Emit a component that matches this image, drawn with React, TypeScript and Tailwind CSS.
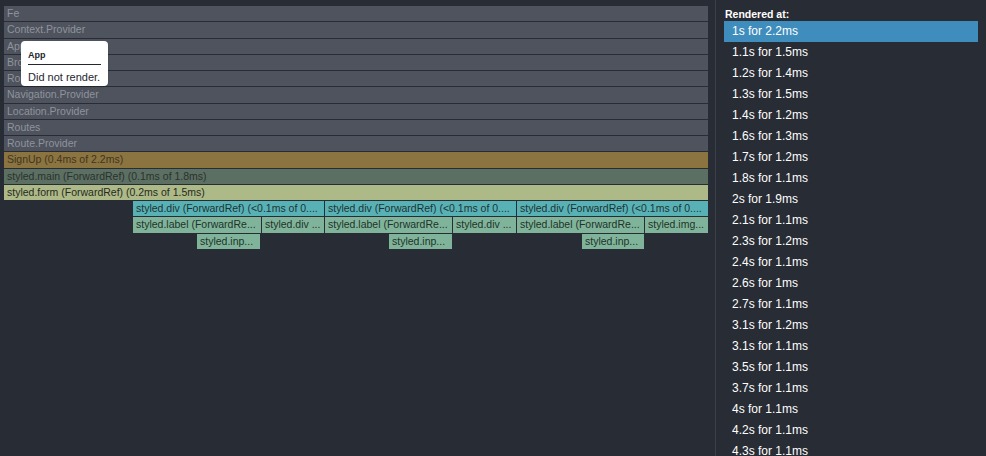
type Node = { label: string; x: number; w: number; bg: string; fg: string };

const GRAY = { bg: "#4f535e", fg: "#8e939c" };

const topRows = [
  "Fe",
  "Context.Provider",
  "App",
  "BrowserRouter",
  "Router",
  "Navigation.Provider",
  "Location.Provider",
  "Routes",
  "Route.Provider",
];

const rows: Node[][] = [
  ...topRows.map((label) => [{ label, x: 4, w: 704, ...GRAY }]),
  [{ label: "SignUp (0.4ms of 2.2ms)", x: 4, w: 704, bg: "#8b7440", fg: "#3f3420" }],
  [{ label: "styled.main (ForwardRef) (0.1ms of 1.8ms)", x: 4, w: 704, bg: "#5b6f62", fg: "#2b322e" }],
  [{ label: "styled.form (ForwardRef) (0.2ms of 1.5ms)", x: 4, w: 704, bg: "#adb986", fg: "#262a24" }],
  [
    { label: "styled.div (ForwardRef) (<0.1ms of 0....", x: 133, w: 191, bg: "#58b2b5", fg: "#1e3236" },
    { label: "styled.div (ForwardRef) (<0.1ms of 0....", x: 325, w: 191, bg: "#58b2b5", fg: "#1e3236" },
    { label: "styled.div (ForwardRef) (<0.1ms of 0....", x: 517, w: 191, bg: "#58b2b5", fg: "#1e3236" },
  ],
  [
    { label: "styled.label (ForwardRe...", x: 133, w: 128, bg: "#80b49a", fg: "#21332b" },
    { label: "styled.div ...", x: 262, w: 62, bg: "#80b49a", fg: "#21332b" },
    { label: "styled.label (ForwardRe...", x: 325, w: 127, bg: "#80b49a", fg: "#21332b" },
    { label: "styled.div ...", x: 453, w: 63, bg: "#80b49a", fg: "#21332b" },
    { label: "styled.label (ForwardRe...", x: 517, w: 127, bg: "#80b49a", fg: "#21332b" },
    { label: "styled.img...", x: 645, w: 63, bg: "#80b49a", fg: "#21332b" },
  ],
  [
    { label: "styled.inp...", x: 197, w: 63, bg: "#80b49a", fg: "#21332b" },
    { label: "styled.inp...", x: 389, w: 63, bg: "#80b49a", fg: "#21332b" },
    { label: "styled.inp...", x: 582, w: 62, bg: "#80b49a", fg: "#21332b" },
  ],
];

const commits = [
  "1s for 2.2ms",
  "1.1s for 1.5ms",
  "1.2s for 1.4ms",
  "1.3s for 1.5ms",
  "1.4s for 1.2ms",
  "1.6s for 1.3ms",
  "1.7s for 1.2ms",
  "1.8s for 1.1ms",
  "2s for 1.9ms",
  "2.1s for 1.1ms",
  "2.3s for 1.2ms",
  "2.4s for 1.1ms",
  "2.6s for 1ms",
  "2.7s for 1.1ms",
  "3.1s for 1.2ms",
  "3.1s for 1.1ms",
  "3.5s for 1.1ms",
  "3.7s for 1.1ms",
  "4s for 1.1ms",
  "4.2s for 1.1ms",
  "4.3s for 1.1ms",
  "4.5s for 1.1ms",
];

function FlameGraph() {
  return (
    <div className="relative w-[716px] shrink-0 border-r border-[#3a3e47] bg-[#282c34] pt-[6px]">
      {rows.map((row, i) => (
        <div key={i} className="relative h-[16.25px]">
          {row.map((n, j) => (
            <div
              key={j}
              className="absolute top-0 h-[15.25px] overflow-hidden whitespace-nowrap pl-[3px] text-[10.5px] leading-[15px]"
              style={{ left: n.x, width: n.w, background: n.bg, color: n.fg }}
            >
              {n.label}
            </div>
          ))}
        </div>
      ))}

      {/* tooltip */}
      <div className="absolute left-[21px] top-[41px] h-[45px] w-[87px] rounded-[4px] bg-white px-[7px] pt-[9px] text-[#23272f] shadow">
        <div className="border-b border-[#23272f] pb-[3px] text-[9px] font-bold leading-[11px]">App</div>
        <div className="whitespace-nowrap pt-[5px] text-[11px] leading-[14px]">Did not render.</div>
      </div>
    </div>
  );
}

function Sidebar() {
  return (
    <div className="flex-1 px-[8px] pt-[7px]">
      <div className="pl-[1px] text-[10.5px] font-bold leading-[14px] text-white">Rendered at:</div>
      <ul className="w-[254px]">
        {commits.map((c, i) => (
          <li
            key={i}
            className={`h-[21px] pl-[8px] text-[12px] leading-[21px] text-white ${i === 0 ? "bg-[#3f8dbd]" : ""}`}
          >
            {c}
          </li>
        ))}
      </ul>
    </div>
  );
}

export default function App() {
  return (
    <div className="flex h-[456px] w-[986px] overflow-hidden bg-[#282c34] font-['Liberation_Sans',Arial,sans-serif]">
      <FlameGraph />
      <Sidebar />
    </div>
  );
}
